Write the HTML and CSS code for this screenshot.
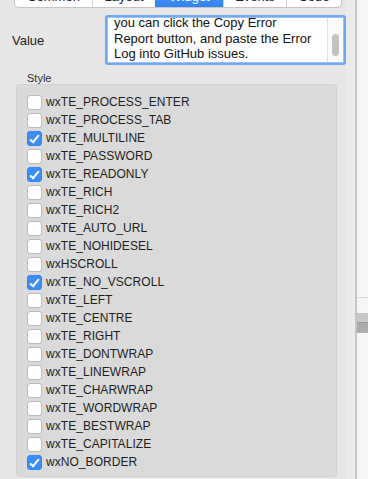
FILE: index.html
```html
<!DOCTYPE html>
<html lang="en">
<head>
    <meta charset="UTF-8">
    <title>Widget properties</title>
    <link rel="stylesheet" href="styles.css">
</head>
<body>
    <div class="window">
        <div class="panel">
            <div class="tabs">
                <span class="tab">Common</span>
                <span class="tab">Layout</span>
                <span class="tab active">Widget</span>
                <span class="tab">Events</span>
                <span class="tab">Code</span>
            </div>

            <div class="value-row">
                <label class="value-label">Value</label>
                <div class="textbox">
                    <div class="textbox-text">
                        <p>you can click the Copy Error</p>
                        <p>Report button, and paste the Error</p>
                        <p>Log into GitHub issues.</p>
                    </div>
                    <div class="scrollbar"><div class="thumb"></div></div>
                </div>
            </div>

            <div class="style-label">Style</div>
            <div class="group">
                <label class="check"><span class="box"></span>wxTE_PROCESS_ENTER</label>
                <label class="check"><span class="box"></span>wxTE_PROCESS_TAB</label>
                <label class="check"><span class="box on"></span>wxTE_MULTILINE</label>
                <label class="check"><span class="box"></span>wxTE_PASSWORD</label>
                <label class="check"><span class="box on"></span>wxTE_READONLY</label>
                <label class="check"><span class="box"></span>wxTE_RICH</label>
                <label class="check"><span class="box"></span>wxTE_RICH2</label>
                <label class="check"><span class="box"></span>wxTE_AUTO_URL</label>
                <label class="check"><span class="box"></span>wxTE_NOHIDESEL</label>
                <label class="check"><span class="box"></span>wxHSCROLL</label>
                <label class="check"><span class="box on"></span>wxTE_NO_VSCROLL</label>
                <label class="check"><span class="box"></span>wxTE_LEFT</label>
                <label class="check"><span class="box"></span>wxTE_CENTRE</label>
                <label class="check"><span class="box"></span>wxTE_RIGHT</label>
                <label class="check"><span class="box"></span>wxTE_DONTWRAP</label>
                <label class="check"><span class="box"></span>wxTE_LINEWRAP</label>
                <label class="check"><span class="box"></span>wxTE_CHARWRAP</label>
                <label class="check"><span class="box"></span>wxTE_WORDWRAP</label>
                <label class="check"><span class="box"></span>wxTE_BESTWRAP</label>
                <label class="check"><span class="box"></span>wxTE_CAPITALIZE</label>
                <label class="check"><span class="box on"></span>wxNO_BORDER</label>
            </div>
        </div>
        <div class="divider"></div>
        <div class="side">
            <div class="side-line"></div>
            <div class="side-band"></div>
            <div class="side-bar"></div>
        </div>
    </div>
</body>
</html>
```

FILE: styles.css
```css
body {
    margin: 0;
    overflow: hidden;
    font-family: 'Liberation Sans', Arial, sans-serif;
    color: #1d1d1d;
    background: #f5f5f5;
}
.window {
    display: flex;
    height: 479px;
}
.panel {
    width: 330px;
    padding: 0 9px 0 16px;
    background: linear-gradient(to right, #e6e6e6 0, #e6e6e6 346px, #ebebeb 346px);
}
.tabs {
    display: flex;
    margin: -14px 0 0 -2px;
    width: 326px;
    height: 21px;
    border: 1px solid #c4c4c4;
    border-top: none;
    border-radius: 0 0 5px 5px;
    background: #fff;
    overflow: hidden;
    font-size: 13px;
}
.tab {
    display: flex;
    align-items: center;
    justify-content: center;
    border-left: 1px solid #d0d0d0;
}
.tab:nth-child(1) { width: 77px; border-left: none; }
.tab:nth-child(2) { width: 62px; }
.tab:nth-child(3) { width: 67px; }
.tab:nth-child(4) { width: 62px; }
.tab:nth-child(5) { flex: 1; }
.tab.active {
    background: linear-gradient(#5aa3f8, #2f83f4);
    color: #fff;
    border-left-color: #2f83f4;
}
.value-row {
    display: flex;
    align-items: center;
    margin-top: 9px;
    margin-left: -4px;
}
.value-label {
    width: 95px;
    font-size: 13px;
}
.textbox {
    display: flex;
    width: 235px;
    height: 44px;
    background: #fff;
    border: 1px solid #9dc0ee;
    box-shadow: 0 0 0 2px #6ea8f2;
    border-radius: 1px;
    overflow: hidden;
}
.textbox-text {
    flex: 1;
    padding-left: 6px;
    margin-top: -3px;
    font-size: 13px;
    line-height: 15.5px;
    color: #111;
}
.textbox-text p {
    margin: 0;
    white-space: nowrap;
}
.scrollbar {
    width: 15px;
    border-left: 1px solid #e4e4e4;
    background: #fafafa;
    padding-top: 16px;
}
.thumb {
    width: 7px;
    height: 22px;
    margin-left: 4px;
    border-radius: 4px;
    background: #c2c2c2;
}
.style-label {
    margin: 9px 0 0 11px;
    font-size: 11px;
    color: #333;
}
.group {
    margin-top: 0;
    height: 393px;
    padding: 8px 0 0 10px;
    background: #dadada;
    border: 1px solid #d2d2d2;
    border-radius: 4px;
    box-sizing: border-box;
    width: 321px;
}
.check {
    display: flex;
    align-items: center;
    height: 18px;
    font-size: 12px;
    letter-spacing: 0.05px;
    color: #1e1e1e;
}
.box {
    width: 13px;
    height: 13px;
    margin-right: 4px;
    border: 1px solid #bcbcbc;
    border-radius: 3px;
    background: #fff;
    box-sizing: content-box;
    position: relative;
}
.box.on {
    background: #3b8ef5;
    border-color: #3585ee;
}
.box.on::after {
    content: '';
    position: absolute;
    left: 4px;
    top: 1px;
    width: 3px;
    height: 8px;
    border: solid #fff;
    border-width: 0 2px 2px 0;
    transform: rotate(40deg);
}
.divider {
    width: 2px;
    background: #c6c6c6;
}
.side {
    flex: 1;
    background: #f6f6f6;
    padding-top: 297px;
}
.side-line {
    height: 1px;
    background: #dcdcdc;
    margin-bottom: 15px;
}
.side-band {
    height: 9px;
    background: #c8c8c8;
    border-bottom: 1px solid #9a9a9a;
}
.side-bar {
    height: 10px;
    background: #adadad;
}
```
